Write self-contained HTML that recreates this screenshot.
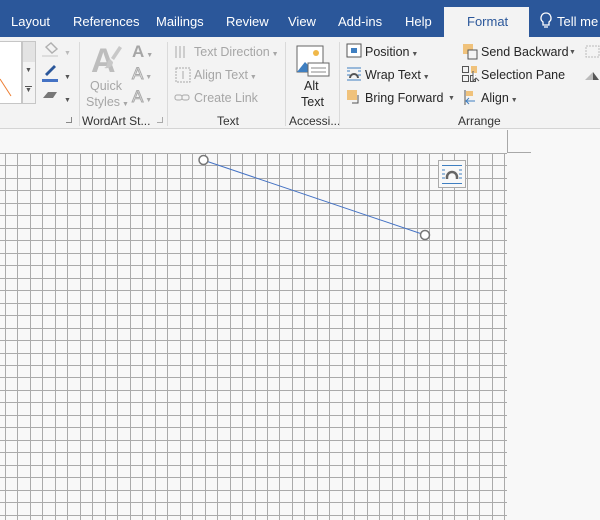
<!DOCTYPE html>
<html><head><meta charset="utf-8"><style>
*{margin:0;padding:0;box-sizing:border-box}
body{width:600px;height:520px;overflow:hidden;background:#f8f8f8;font-family:"Liberation Sans",sans-serif;position:relative}
.a{position:absolute;white-space:nowrap}
.tab{color:#fff;font-size:13px;top:14px}
.rb{font-size:12.5px;color:#262626}
.dis{color:#a6a6a6}
.grp{font-size:12px;color:#333;top:114px}
.sep{position:absolute;top:42px;width:1px;height:84px;background:#dadada}
.dd{font-size:7px;color:#555}
</style></head><body>
<div class="a" style="left:0;top:0;width:600px;height:37px;background:#2b579a"></div>
<div class="a" style="left:444px;top:7px;width:85px;height:31px;background:#f3f3f3"></div>
<div class="a tab" style="left:11px">Layout</div>
<div class="a tab" style="left:73px">References</div>
<div class="a tab" style="left:156px">Mailings</div>
<div class="a tab" style="left:226px">Review</div>
<div class="a tab" style="left:288px">View</div>
<div class="a tab" style="left:338px">Add-ins</div>
<div class="a tab" style="left:405px">Help</div>
<div class="a tab" style="left:467px;color:#2b579a">Format</div>
<svg class="a" style="left:539px;top:12px" width="14" height="18"><path d="M7 1a5 5 0 0 0-3 9v3h6v-3a5 5 0 0 0-3-9zM5 15h4" fill="none" stroke="#fff" stroke-width="1.3"/></svg>
<div class="a tab" style="left:557px">Tell me</div>
<div class="a" style="left:0;top:37px;width:600px;height:92px;background:#f3f3f3;border-bottom:1px solid #d4d4d4"></div>
<div class="a" style="left:0;top:41px;width:22px;height:63px;background:#fff;border:1px solid #c6c6c6;border-left:none"></div>
<svg class="a" style="left:0;top:41px" width="22" height="63"><line x1="0" y1="38" x2="11" y2="55" stroke="#ed7d31"/></svg>
<div class="a" style="left:22px;top:41px;width:14px;height:63px;border:1px solid #c6c6c6;background:#f3f3f3"></div>
<div class="a" style="left:23px;top:42px;width:12px;height:20px;background:#e3e3e3"></div>
<div class="a dd" style="left:25px;top:67px">▼</div>
<div class="a dd" style="left:25px;top:87px;text-decoration:overline">▼</div>
<svg class="a" style="left:42px;top:41px" width="30" height="64">
<path d="M4 6l5-4 6 6-5 4z" fill="none" stroke="#b0b0b0" stroke-width="1.4"/><rect x="0" y="14" width="16" height="2" fill="#ddd"/>
<path d="M3 33l9-9 2 2-9 9z" fill="#2b579a"/><rect x="0" y="38" width="16" height="3" fill="#4472c4"/>
<path d="M1 57l5-6h9l-4 6z" fill="#777"/>
<text x="22" y="14" font-size="7" fill="#bbb">▼</text><text x="22" y="38" font-size="7" fill="#555">▼</text><text x="22" y="61" font-size="7" fill="#555">▼</text>
</svg>
<div class="a" style="left:66px;top:117px;width:6px;height:6px;border-right:1px solid #888;border-bottom:1px solid #888"></div>
<div class="sep" style="left:79px"></div>
<div class="a dis" style="left:91px;top:42px;font-size:34px;font-weight:bold;color:#bdbdbd">A</div>
<svg class="a" style="left:104px;top:44px" width="20" height="30"><path d="M15 2l3 2-8 12-3-2z" fill="#c8c8c8"/><path d="M6 15c-4 2-2 8-6 9 5 1 9-2 9-6z" fill="#c8c8c8"/></svg>
<div class="a rb dis" style="left:90px;top:79px">Quick</div>
<div class="a rb dis" style="left:86px;top:95px">Styles<span style="font-size:7px"> ▼</span></div>
<div class="a dis" style="left:132px;top:42px;font-size:17px;font-weight:bold">A<span style="font-size:7px;font-weight:normal"> ▼</span></div>
<div class="a dis" style="left:132px;top:64px;font-size:17px;color:#fff;-webkit-text-stroke:1px #aaa">A<span style="font-size:7px;color:#aaa;-webkit-text-stroke:0"> ▼</span></div>
<div class="a dis" style="left:132px;top:87px;font-size:17px;color:#eee;-webkit-text-stroke:1px #aaa">A<span style="font-size:7px;color:#aaa;-webkit-text-stroke:0"> ▼</span></div>
<div class="a grp" style="left:82px">WordArt St...</div>
<div class="a" style="left:157px;top:117px;width:6px;height:6px;border-right:1px solid #aaa;border-bottom:1px solid #aaa"></div>
<div class="sep" style="left:167px"></div>
<svg class="a" style="left:174px;top:44px" width="18" height="60"><g stroke="#aaa" fill="none"><path d="M2 2v12M6 2v12M10 2v12"/><rect x="2" y="24" width="14" height="14" stroke-dasharray="2 1"/><path d="M9 27v8"/><rect x="1" y="51" width="7" height="5" rx="2"/><rect x="8" y="51" width="7" height="5" rx="2"/></g></svg>
<div class="a rb dis" style="left:194px;top:45px">Text Direction<span style="font-size:7px"> ▼</span></div>
<div class="a rb dis" style="left:194px;top:68px">Align Text<span style="font-size:7px"> ▼</span></div>
<div class="a rb dis" style="left:194px;top:91px">Create Link</div>
<div class="a grp" style="left:217px">Text</div>
<div class="sep" style="left:285px"></div>
<svg class="a" style="left:296px;top:45px" width="34" height="32"><rect x="1" y="1" width="26" height="26" fill="#fff" stroke="#666"/><circle cx="20" cy="8" r="3" fill="#f0b84a"/><path d="M1 27l8-10 5 5 4-3 8 8z" fill="#3f7fc1"/><rect x="12" y="18" width="21" height="13" fill="#fff" stroke="#666"/><path d="M15 23h15M15 27h15" stroke="#888"/></svg>
<div class="a rb" style="left:304px;top:79px">Alt</div>
<div class="a rb" style="left:301px;top:95px">Text</div>
<div class="a grp" style="left:289px">Accessi...</div>
<div class="sep" style="left:339px"></div>
<svg class="a" style="left:346px;top:43px" width="16" height="62"><rect x="1" y="1" width="14" height="13" fill="#fff" stroke="#555"/><rect x="5" y="5" width="6" height="5" fill="#3f7fc1"/>
<g stroke="#3f7fc1"><path d="M1 25h14M1 37h14"/></g><path d="M4 35a4 4 0 0 1 8 0" stroke="#555" stroke-width="2" fill="none"/><path d="M1 28h3M12 28h3M1 32h3M12 32h3" stroke="#3f7fc1"/>
<rect x="1" y="47" width="10" height="10" fill="#f0c27b"/><path d="M12 52v8h-6" stroke="#555" fill="none"/></svg>
<div class="a rb" style="left:365px;top:45px">Position<span class="dd"> ▼</span></div>
<div class="a rb" style="left:365px;top:68px">Wrap Text<span class="dd"> ▼</span></div>
<div class="a rb" style="left:365px;top:91px">Bring Forward</div>
<div class="a dd" style="left:448px;top:95px">▼</div>
<svg class="a" style="left:462px;top:43px" width="18" height="62"><rect x="1" y="1" width="10" height="10" fill="#f0c27b"/><rect x="6" y="7" width="9" height="9" fill="#f3f3f3" stroke="#555"/>
<g fill="none" stroke="#555"><rect x="0.5" y="23.5" width="6" height="6"/><rect x="0.5" y="32.5" width="6" height="6"/><rect x="8.5" y="32.5" width="5" height="6"/></g><rect x="9" y="23" width="6" height="7" fill="#f0c27b"/><path d="M11 28l0 10 3-3 3 3" stroke="#555" fill="#fff"/>
<path d="M3 47v16" stroke="#555"/><rect x="4" y="48" width="7" height="5" fill="#f0c27b"/><path d="M13 58h-9l3-3M4 58l3 3" stroke="#3f7fc1" fill="none"/></svg>
<div class="a rb" style="left:481px;top:45px">Send Backward</div>
<div class="a dd" style="left:569px;top:49px">▼</div>
<div class="a rb" style="left:481px;top:68px">Selection Pane</div>
<div class="a rb" style="left:481px;top:91px">Align<span class="dd"> ▼</span></div>
<svg class="a" style="left:584px;top:43px" width="16" height="40"><rect x="2" y="3" width="13" height="11" fill="none" stroke="#bbb" stroke-dasharray="2 1"/><path d="M1 37l8-8v8z" fill="#bbb"/><path d="M9 29l6 8h-6z" fill="#555"/></svg>
<div class="a grp" style="left:458px">Arrange</div>
<div class="a" style="left:507px;top:130px;width:1px;height:23px;background:#a8a8a8"></div>
<div class="a" style="left:507px;top:152px;width:24px;height:1px;background:#a8a8a8"></div>
<svg class="a" style="left:0;top:0" width="600" height="520">
<g stroke="#aaaaaa" stroke-width="1" shape-rendering="crispEdges" id="grid"></g>
<line x1="203" y1="160" x2="425" y2="235" stroke="#4472c4" stroke-width="1"/>
<circle cx="203.5" cy="160" r="4.5" fill="#fff" stroke="#777" stroke-width="1.5"/>
<circle cx="425" cy="235" r="4.5" fill="#fff" stroke="#777" stroke-width="1.5"/>
<rect x="438.5" y="160.5" width="27" height="27" fill="#f8f8f8" stroke="#aaa"/>
<g stroke="#3f7fc1"><path d="M442 165.5h20M442 183.5h20M442 170h3M459 170h3M442 174h3M459 174h3M442 178h3M459 178h3"/></g>
<path d="M447 179v-2a5 5 0 0 1 10 0v2" stroke="#666" stroke-width="2.5" fill="none"/>
</svg>
<script>
(function(){var g=document.getElementById('grid'),s='';
for(var i=0;i<=40;i++){var x=Math.round(5+i*12.475)+0.5;s+='<line x1="'+x+'" y1="153" x2="'+x+'" y2="520"/>';}
for(var j=0;j<=29;j++){var y=Math.round(153+j*12.47)+0.5;s+='<line x1="0" y1="'+y+'" x2="507" y2="'+y+'"/>';}
g.innerHTML=s;
var l=document.querySelector('svg:last-of-type');})();
</script>
</body></html>
